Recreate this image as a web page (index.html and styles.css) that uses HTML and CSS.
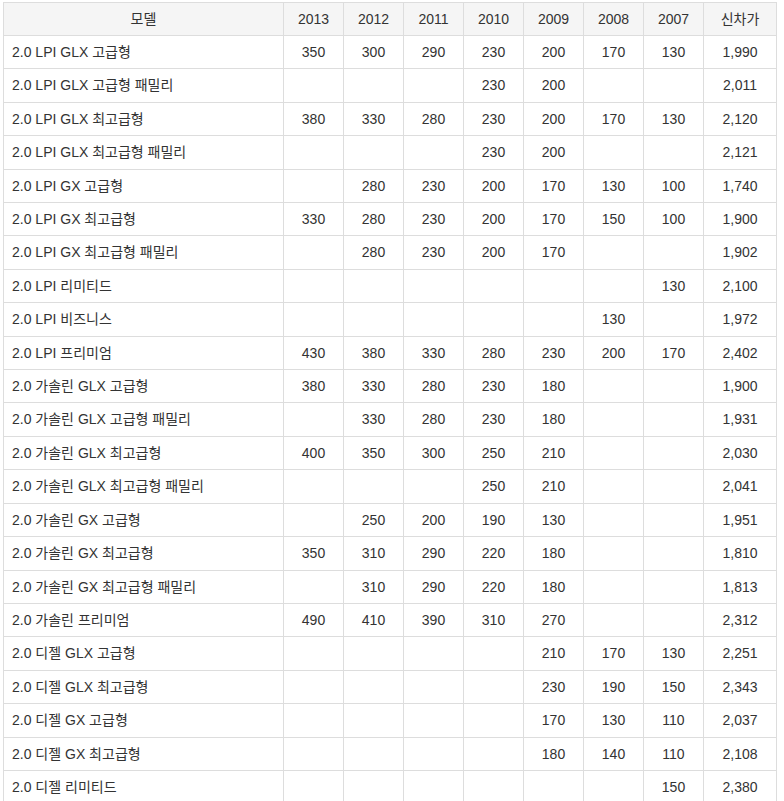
FILE: index.html
```html
<!DOCTYPE html>
<html lang="ko">
<head>
<meta charset="utf-8">
<link rel="stylesheet" href="styles.css">
</head>
<body>
<table class="price">
<colgroup>
<col class="c-model"><col class="c-year"><col class="c-year"><col class="c-year"><col class="c-year"><col class="c-year"><col class="c-year"><col class="c-year"><col class="c-new">
</colgroup>
<thead>
<tr><th>모델</th><th>2013</th><th>2012</th><th>2011</th><th>2010</th><th>2009</th><th>2008</th><th>2007</th><th>신차가</th></tr>
</thead>
<tbody>
<tr><td class="name">2.0 LPI GLX 고급형</td><td>350</td><td>300</td><td>290</td><td>230</td><td>200</td><td>170</td><td>130</td><td>1,990</td></tr>
<tr><td class="name">2.0 LPI GLX 고급형 패밀리</td><td></td><td></td><td></td><td>230</td><td>200</td><td></td><td></td><td>2,011</td></tr>
<tr><td class="name">2.0 LPI GLX 최고급형</td><td>380</td><td>330</td><td>280</td><td>230</td><td>200</td><td>170</td><td>130</td><td>2,120</td></tr>
<tr><td class="name">2.0 LPI GLX 최고급형 패밀리</td><td></td><td></td><td></td><td>230</td><td>200</td><td></td><td></td><td>2,121</td></tr>
<tr><td class="name">2.0 LPI GX 고급형</td><td></td><td>280</td><td>230</td><td>200</td><td>170</td><td>130</td><td>100</td><td>1,740</td></tr>
<tr><td class="name">2.0 LPI GX 최고급형</td><td>330</td><td>280</td><td>230</td><td>200</td><td>170</td><td>150</td><td>100</td><td>1,900</td></tr>
<tr><td class="name">2.0 LPI GX 최고급형 패밀리</td><td></td><td>280</td><td>230</td><td>200</td><td>170</td><td></td><td></td><td>1,902</td></tr>
<tr><td class="name">2.0 LPI 리미티드</td><td></td><td></td><td></td><td></td><td></td><td></td><td>130</td><td>2,100</td></tr>
<tr><td class="name">2.0 LPI 비즈니스</td><td></td><td></td><td></td><td></td><td></td><td>130</td><td></td><td>1,972</td></tr>
<tr><td class="name">2.0 LPI 프리미엄</td><td>430</td><td>380</td><td>330</td><td>280</td><td>230</td><td>200</td><td>170</td><td>2,402</td></tr>
<tr><td class="name">2.0 가솔린 GLX 고급형</td><td>380</td><td>330</td><td>280</td><td>230</td><td>180</td><td></td><td></td><td>1,900</td></tr>
<tr><td class="name">2.0 가솔린 GLX 고급형 패밀리</td><td></td><td>330</td><td>280</td><td>230</td><td>180</td><td></td><td></td><td>1,931</td></tr>
<tr><td class="name">2.0 가솔린 GLX 최고급형</td><td>400</td><td>350</td><td>300</td><td>250</td><td>210</td><td></td><td></td><td>2,030</td></tr>
<tr><td class="name">2.0 가솔린 GLX 최고급형 패밀리</td><td></td><td></td><td></td><td>250</td><td>210</td><td></td><td></td><td>2,041</td></tr>
<tr><td class="name">2.0 가솔린 GX 고급형</td><td></td><td>250</td><td>200</td><td>190</td><td>130</td><td></td><td></td><td>1,951</td></tr>
<tr><td class="name">2.0 가솔린 GX 최고급형</td><td>350</td><td>310</td><td>290</td><td>220</td><td>180</td><td></td><td></td><td>1,810</td></tr>
<tr><td class="name">2.0 가솔린 GX 최고급형 패밀리</td><td></td><td>310</td><td>290</td><td>220</td><td>180</td><td></td><td></td><td>1,813</td></tr>
<tr><td class="name">2.0 가솔린 프리미엄</td><td>490</td><td>410</td><td>390</td><td>310</td><td>270</td><td></td><td></td><td>2,312</td></tr>
<tr><td class="name">2.0 디젤 GLX 고급형</td><td></td><td></td><td></td><td></td><td>210</td><td>170</td><td>130</td><td>2,251</td></tr>
<tr><td class="name">2.0 디젤 GLX 최고급형</td><td></td><td></td><td></td><td></td><td>230</td><td>190</td><td>150</td><td>2,343</td></tr>
<tr><td class="name">2.0 디젤 GX 고급형</td><td></td><td></td><td></td><td></td><td>170</td><td>130</td><td>110</td><td>2,037</td></tr>
<tr><td class="name">2.0 디젤 GX 최고급형</td><td></td><td></td><td></td><td></td><td>180</td><td>140</td><td>110</td><td>2,108</td></tr>
<tr><td class="name">2.0 디젤 리미티드</td><td></td><td></td><td></td><td></td><td></td><td></td><td>150</td><td>2,380</td></tr>
</tbody>
</table>
</body>
</html>
```
FILE: styles.css
```css
html, body {
  margin: 0;
  padding: 0;
  background: #fff;
}
body {
  padding: 2px 0 0 3px;
  font-family: "Liberation Sans", "Noto Sans CJK KR", sans-serif;
  font-size: 14px;
  color: #333;
}
.price {
  border-collapse: collapse;
  table-layout: fixed;
  width: 773px;
}
.c-model { width: 280px; }
.c-year { width: 60px; }
.c-new { width: 73px; }
.price th,
.price td {
  border: 1px solid #ddd;
  text-align: center;
  padding: 6px 8px;
  font-weight: normal;
  white-space: nowrap;
}
.price th {
  background: #f5f5f5;
  line-height: 20px;
}
.price td {
  line-height: 20.4px;
}
.price td.name {
  text-align: left;
}
```
